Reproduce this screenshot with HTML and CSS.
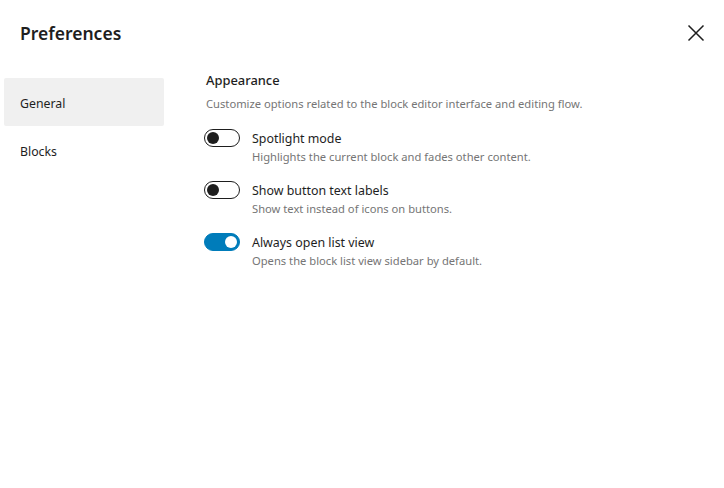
FILE: index.html
```html
<!DOCTYPE html>
<html lang="en">
<head>
  <meta charset="UTF-8">
  <title>Preferences</title>
  <link rel="stylesheet" href="styles.css">
</head>
<body>
  <div class="modal">
    <div class="modal-header">
      <h1>Preferences</h1>
      <button class="close" aria-label="Close">
        <svg width="24" height="24" viewBox="0 0 24 24"><path d="M4.5 4.5l15 15M19.5 4.5l-15 15" stroke="#1e1e1e" stroke-width="1.5" fill="none"/></svg>
      </button>
    </div>
    <div class="modal-body">
      <nav class="tabs">
        <div class="tab active">General</div>
        <div class="tab">Blocks</div>
      </nav>
      <section class="panel">
        <h2>Appearance</h2>
        <p class="section-desc">Customize options related to the block editor interface and editing flow.</p>

        <div class="option">
          <span class="toggle"></span>
          <div class="option-text">
            <div class="option-label">Spotlight mode</div>
            <div class="option-help">Highlights the current block and fades other content.</div>
          </div>
        </div>

        <div class="option">
          <span class="toggle"></span>
          <div class="option-text">
            <div class="option-label">Show button text labels</div>
            <div class="option-help">Show text instead of icons on buttons.</div>
          </div>
        </div>

        <div class="option">
          <span class="toggle on"></span>
          <div class="option-text">
            <div class="option-label">Always open list view</div>
            <div class="option-help">Opens the block list view sidebar by default.</div>
          </div>
        </div>
      </section>
    </div>
  </div>
</body>
</html>
```

FILE: styles.css
```css
body {
  margin: 0;
  font-family: 'Noto Sans', 'Open Sans', sans-serif;
  color: #1e1e1e;
  background: #fff;
}

.modal-header {
  display: flex;
  align-items: center;
  justify-content: space-between;
  height: 66px;
  padding: 0 16px 0 20px;
}

.modal-header h1 {
  margin: 0;
  font-size: 17.5px;
  font-weight: 600;
}

.close {
  background: none;
  border: none;
  padding: 0;
  width: 24px;
  height: 24px;
  cursor: pointer;
}

.modal-body {
  display: flex;
  padding-top: 12px;
}

.tabs {
  width: 160px;
  margin-left: 4px;
}

.tab {
  height: 48px;
  line-height: 51px;
  padding-left: 16px;
  font-size: 12.3px;
  border-radius: 2px;
}

.tab.active {
  background: #f0f0f0;
}

.panel {
  margin-left: 40px;
}

.panel h2 {
  margin: -8px 0 0 2px;
  font-size: 12.9px;
  font-weight: 500;
  line-height: 20px;
}

.section-desc {
  margin: 4px 0 14px 2px;
  font-size: 11.2px;
  line-height: 20px;
  color: #757575;
}

.option {
  display: flex;
  align-items: flex-start;
  gap: 12px;
  margin-bottom: 15px;
}

.toggle {
  position: relative;
  width: 36px;
  height: 18px;
  box-sizing: border-box;
  border: 1px solid #1e1e1e;
  border-radius: 9px;
  margin-top: 1px;
  flex-shrink: 0;
}

.toggle::after {
  content: '';
  position: absolute;
  top: 2px;
  left: 2px;
  width: 12px;
  height: 12px;
  border-radius: 50%;
  background: #1e1e1e;
}

.toggle.on {
  background: #007cba;
  border-color: #007cba;
}

.toggle.on::after {
  left: 20px;
  background: #fff;
}

.option-text {
  padding-top: 1px;
}

.option-label {
  font-size: 12.4px;
  line-height: 20px;
}

.option-help {
  font-size: 11.2px;
  line-height: 16px;
  color: #757575;
}
```
